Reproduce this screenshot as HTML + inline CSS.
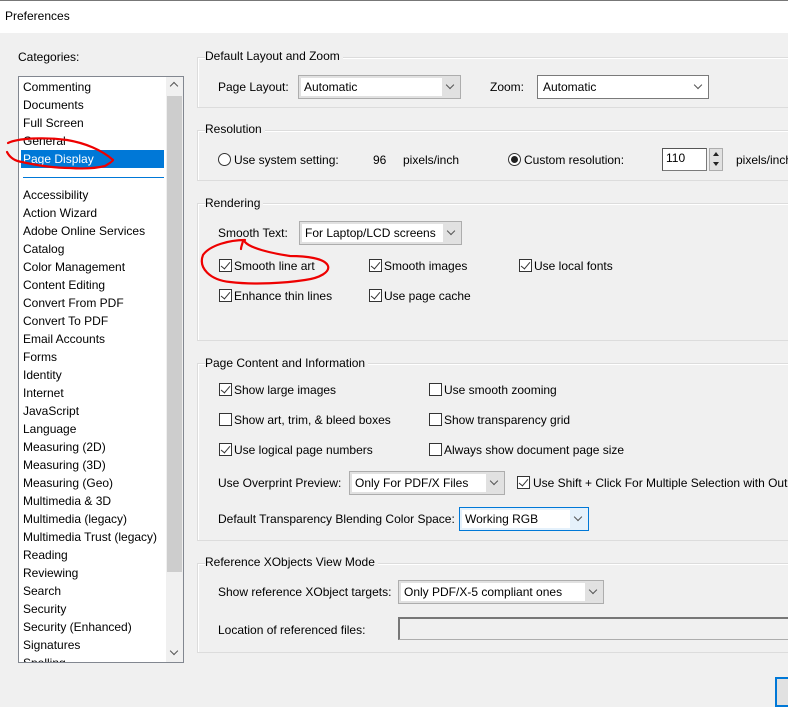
<!DOCTYPE html>
<html><head><style>
*{box-sizing:border-box}
body{margin:0;width:788px;height:698px;overflow:hidden;background:#f0f0f0;font-family:"Liberation Sans",sans-serif;font-size:12px;color:#000;position:relative}
.a{position:absolute;white-space:nowrap}
.grp{position:absolute;left:197px;width:600px;border:1px solid #dcdcdc;box-shadow:inset 1px 1px 0 #fff}
.gt{position:absolute;left:205px;background:#f0f0f0;padding:0 3px 0 0;font-size:12px}
.cb{position:absolute;width:13px;height:13px;border:1px solid #333;background:#fff}
.cb.on::after{content:"";position:absolute;left:3px;top:0px;width:4px;height:8px;border:solid #333;border-width:0 1.3px 1.3px 0;transform:rotate(40deg)}
.sel{position:absolute;height:24px;border:1px solid #adadad;background:#e1e1e1}
.sel .in{position:absolute;left:2px;top:2px;bottom:2px;background:#fff;padding:2px 3px;white-space:nowrap}
.sel .ar{position:absolute;right:7px;top:6px;width:6px;height:6px;border:solid #555;border-width:0 1px 1px 0;transform:rotate(45deg)}
.li{position:absolute;left:23px;height:18px;line-height:18px}
</style></head><body>
<div class="a" style="left:0;top:0;width:788px;height:33px;background:#fff;border-top:1px solid #777"></div>
<div class="a" style="left:5px;top:9px;font-size:12px">Preferences</div>
<div class="a" style="left:18px;top:50px">Categories:</div>
<div class="a" style="left:18px;top:76px;width:166px;height:587px;background:#fff;border:1px solid #828790;overflow:hidden">
<div style="position:absolute;left:147px;top:0;width:17px;height:585px;background:#f0f0f0"></div>
<div style="position:absolute;left:148px;top:19px;width:15px;height:476px;background:#cdcdcd"></div>
<div style="position:absolute;left:152px;top:6px;width:6px;height:6px;border:solid #555;border-width:1px 0 0 1px;transform:rotate(45deg)"></div>
<div style="position:absolute;left:152px;top:571px;width:6px;height:6px;border:solid #555;border-width:0 1px 1px 0;transform:rotate(45deg)"></div>
<div style="position:absolute;left:2px;top:73px;width:143px;height:18px;background:#0078d7"></div>
<div style="position:absolute;left:4px;top:100px;width:141px;height:1px;background:#0078d7"></div>
</div>
<div class="li" style="top:78px">Commenting</div>
<div class="li" style="top:96px">Documents</div>
<div class="li" style="top:114px">Full Screen</div>
<div class="li" style="top:132px">General</div>
<div class="li" style="top:150px;color:#fff">Page Display</div>
<div class="li" style="top:186px">Accessibility</div>
<div class="li" style="top:204px">Action Wizard</div>
<div class="li" style="top:222px">Adobe Online Services</div>
<div class="li" style="top:240px">Catalog</div>
<div class="li" style="top:258px">Color Management</div>
<div class="li" style="top:276px">Content Editing</div>
<div class="li" style="top:294px">Convert From PDF</div>
<div class="li" style="top:312px">Convert To PDF</div>
<div class="li" style="top:330px">Email Accounts</div>
<div class="li" style="top:348px">Forms</div>
<div class="li" style="top:366px">Identity</div>
<div class="li" style="top:384px">Internet</div>
<div class="li" style="top:402px">JavaScript</div>
<div class="li" style="top:420px">Language</div>
<div class="li" style="top:438px">Measuring (2D)</div>
<div class="li" style="top:456px">Measuring (3D)</div>
<div class="li" style="top:474px">Measuring (Geo)</div>
<div class="li" style="top:492px">Multimedia &amp; 3D</div>
<div class="li" style="top:510px">Multimedia (legacy)</div>
<div class="li" style="top:528px">Multimedia Trust (legacy)</div>
<div class="li" style="top:546px">Reading</div>
<div class="li" style="top:564px">Reviewing</div>
<div class="li" style="top:582px">Search</div>
<div class="li" style="top:600px">Security</div>
<div class="li" style="top:618px">Security (Enhanced)</div>
<div class="li" style="top:636px">Signatures</div>
<div class="li" style="top:654px;height:8px;overflow:hidden">Spelling</div>

<div class="grp" style="top:57px;height:51px"></div><div class="gt a" style="top:49px">Default Layout and Zoom</div>
<div class="a" style="left:218px;top:80px">Page Layout:</div>
<div class="sel" style="left:298px;top:75px;width:163px"><div class="in" style="width:141px">Automatic</div><div class="ar"></div></div>
<div class="a" style="left:490px;top:80px">Zoom:</div>
<div class="sel" style="left:537px;top:75px;width:172px;background:#fff;border-color:#7a7a7a"><div class="in">Automatic</div><div class="ar"></div></div>

<div class="grp" style="top:130px;height:51px"></div><div class="gt a" style="top:122px">Resolution</div>
<div class="a" style="left:218px;top:153px;width:13px;height:13px;border:1px solid #333;border-radius:50%;background:#fff"></div>
<div class="a" style="left:234px;top:153px">Use system setting:</div>
<div class="a" style="left:373px;top:153px">96</div>
<div class="a" style="left:403px;top:153px">pixels/inch</div>
<div class="a" style="left:508px;top:153px;width:13px;height:13px;border:1px solid #333;border-radius:50%;background:#fff"><div style="position:absolute;left:2px;top:2px;width:7px;height:7px;border-radius:50%;background:#222"></div></div>
<div class="a" style="left:524px;top:153px">Custom resolution:</div>
<div class="a" style="left:662px;top:148px;width:45px;height:23px;background:#fff;border:1px solid #7a7a7a;border-left-color:#555;border-top-color:#555;padding:2px 3px">110</div>
<div class="a" style="left:709px;top:148px;width:14px;height:23px;background:#e1e1e1;border:1px solid #adadad"><div style="position:absolute;left:3px;top:3px;border:3px solid transparent;border-bottom:4px solid #222;border-top:0"></div><div style="position:absolute;left:3px;top:13px;border:3px solid transparent;border-top:4px solid #222;border-bottom:0"></div></div>
<div class="a" style="left:736px;top:153px">pixels/inch</div>

<div class="grp" style="top:203px;height:138px"></div><div class="gt a" style="top:196px">Rendering</div>
<div class="a" style="left:218px;top:226px">Smooth Text:</div>
<div class="sel" style="left:299px;top:221px;width:163px"><div class="in" style="width:141px">For Laptop/LCD screens</div><div class="ar"></div></div>
<div class="cb on" style="left:219px;top:259px"></div><div class="a" style="left:234px;top:259px">Smooth line art</div>
<div class="cb on" style="left:369px;top:259px"></div><div class="a" style="left:384px;top:259px">Smooth images</div>
<div class="cb on" style="left:519px;top:259px"></div><div class="a" style="left:534px;top:259px">Use local fonts</div>
<div class="cb on" style="left:219px;top:289px"></div><div class="a" style="left:234px;top:289px">Enhance thin lines</div>
<div class="cb on" style="left:369px;top:289px"></div><div class="a" style="left:384px;top:289px">Use page cache</div>

<div class="grp" style="top:363px;height:178px"></div><div class="gt a" style="top:356px">Page Content and Information</div>
<div class="cb on" style="left:219px;top:383px"></div><div class="a" style="left:234px;top:383px">Show large images</div>
<div class="cb" style="left:429px;top:383px"></div><div class="a" style="left:444px;top:383px">Use smooth zooming</div>
<div class="cb" style="left:219px;top:413px"></div><div class="a" style="left:234px;top:413px">Show art, trim, &amp; bleed boxes</div>
<div class="cb" style="left:429px;top:413px"></div><div class="a" style="left:444px;top:413px">Show transparency grid</div>
<div class="cb on" style="left:219px;top:443px"></div><div class="a" style="left:234px;top:443px">Use logical page numbers</div>
<div class="cb" style="left:429px;top:443px"></div><div class="a" style="left:444px;top:443px">Always show document page size</div>
<div class="a" style="left:218px;top:476px">Use Overprint Preview:</div>
<div class="sel" style="left:349px;top:471px;width:156px"><div class="in" style="width:134px">Only For PDF/X Files</div><div class="ar"></div></div>
<div class="cb on" style="left:517px;top:476px"></div><div class="a" style="left:533px;top:476px">Use Shift + Click For Multiple Selection with Output</div>
<div class="a" style="left:218px;top:512px">Default Transparency Blending Color Space:</div>
<div class="sel" style="left:459px;top:507px;width:130px;border-color:#0078d7;background:#e5f1fb"><div class="in" style="width:108px">Working RGB</div><div class="ar"></div></div>

<div class="grp" style="top:563px;height:90px"></div><div class="gt a" style="top:555px">Reference XObjects View Mode</div>
<div class="a" style="left:218px;top:585px">Show reference XObject targets:</div>
<div class="sel" style="left:398px;top:580px;width:206px"><div class="in" style="width:184px">Only PDF/X-5 compliant ones</div><div class="ar"></div></div>
<div class="a" style="left:218px;top:623px">Location of referenced files:</div>
<div class="a" style="left:398px;top:617px;width:400px;height:23px;background:#f0f0f0;border:1px solid #adadad;border-top:2px solid #777;border-left:2px solid #777"></div>
<div class="a" style="left:775px;top:677px;width:20px;height:30px;background:#e1e1e1;border:2px solid #0078d7"></div>

<svg class="a" style="left:0;top:0" width="788" height="698">
<g fill="none" stroke="#e00" stroke-width="2.2" stroke-linecap="round">
<path d="M8 143 C18 138 45 137 67 140 C85 143 102 150 113 160"/>
<path d="M7 152 C10 158 15 161 22 162 C40 166 55 168 70 168 C85 169 97 168 105 166 C110 163 113 161 113 160"/>
<path d="M245 240 C230 240 210 245 203 255 C198 268 210 280 230 282 C255 285 285 283 305 280 C320 278 330 272 328 266 C325 258 305 256 290 256 C270 253 250 248 245 242"/>
<path d="M243 241 C242 245 241 247 241 249"/>
</g></svg>
</body></html>
